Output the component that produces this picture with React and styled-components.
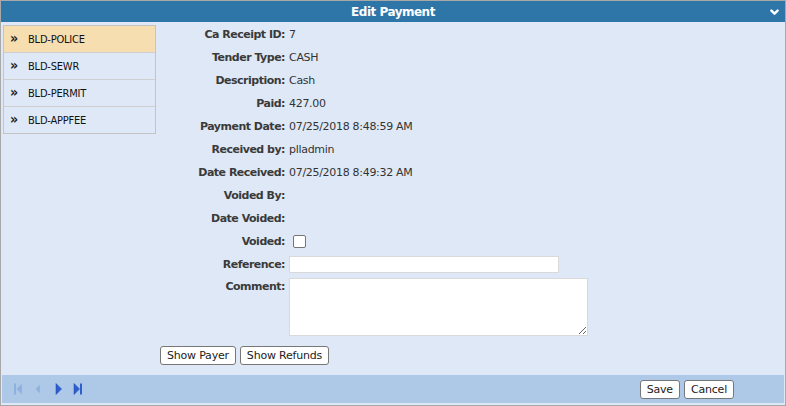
import React, { useState } from 'react';
import styled, { createGlobalStyle } from 'styled-components';

const GlobalStyle = createGlobalStyle`
  body {
    margin: 0;
    background: #ffffff;
    font-family: "DejaVu Sans", Verdana, sans-serif;
    font-size: 11px;
    color: #333;
  }
`;

const fees = ['BLD-POLICE', 'BLD-SEWR', 'BLD-PERMIT', 'BLD-APPFEE'];

const details = [
  ['Ca Receipt ID:', '7'],
  ['Tender Type:', 'CASH'],
  ['Description:', 'Cash'],
  ['Paid:', '427.00'],
  ['Payment Date:', '07/25/2018 8:48:59 AM'],
  ['Received by:', 'plladmin'],
  ['Date Received:', '07/25/2018 8:49:32 AM'],
  ['Voided By:', ''],
  ['Date Voided:', ''],
];

const ChevronDown = () => (
  <svg width="9" height="7" viewBox="0 0 9 7">
    <path d="M1.4 1.6 L4.5 4.7 L7.6 1.6" fill="none" stroke="#fff" strokeWidth="2.4" strokeLinecap="round" strokeLinejoin="round" />
  </svg>
);

const NavIcon = ({ kind, disabled }) => {
  const color = disabled ? '#8eb0dd' : '#2c5fd0';
  const edge = disabled ? '#a9c2e4' : '#1d43a8';
  return (
    <svg width="10" height="14" viewBox="0 0 10 14">
      {kind === 'first' && (
        <>
          <rect x="1" y="1.5" width="2" height="11" fill={color} />
          <path d="M9 1.5 L3.5 7 L9 12.5 Z" fill={color} stroke={edge} strokeWidth="0.5" />
        </>
      )}
      {kind === 'prev' && <path d="M7 2.5 L2.5 7 L7 11.5 Z" fill={color} stroke={edge} strokeWidth="0.5" />}
      {kind === 'next' && <path d="M3 1.5 L8.5 7 L3 12.5 Z" fill={color} stroke={edge} strokeWidth="0.5" />}
      {kind === 'last' && (
        <>
          <path d="M1 1.5 L6.5 7 L1 12.5 Z" fill={color} stroke={edge} strokeWidth="0.5" />
          <rect x="7" y="1.5" width="2" height="11" fill={color} />
        </>
      )}
    </svg>
  );
};

export default function App() {
  const [selected, setSelected] = useState(0);
  const [voided, setVoided] = useState(false);

  return (
    <>
      <GlobalStyle />
      <Panel>
        <Header>
          <Title>Edit Payment</Title>
          <Collapse>
            <ChevronDown />
          </Collapse>
        </Header>
        <Body>
          <FeeList>
            {fees.map((fee, i) => (
              <FeeItem key={fee} $active={i === selected} onClick={() => setSelected(i)}>
                <Arrow>»</Arrow>
                {fee}
              </FeeItem>
            ))}
          </FeeList>
          <Main>
            <Form>
              {details.map(([label, value]) => (
                <Row key={label}>
                  <Label>{label}</Label>
                  <Value>{value}</Value>
                </Row>
              ))}
              <Row>
                <Label>Voided:</Label>
                <Check type="checkbox" checked={voided} onChange={(e) => setVoided(e.target.checked)} />
              </Row>
              <Row>
                <Label>Reference:</Label>
                <TextInput type="text" />
              </Row>
              <Row $top>
                <Label $top>Comment:</Label>
                <Comment />
              </Row>
            </Form>
            <Actions>
              <Button>Show Payer</Button>
              <Button>Show Refunds</Button>
            </Actions>
          </Main>
        </Body>
        <Footer>
          <Pager>
            <NavIcon kind="first" disabled />
            <NavIcon kind="prev" disabled />
            <NavIcon kind="next" />
            <NavIcon kind="last" />
          </Pager>
          <Actions>
            <Button>Save</Button>
            <Button>Cancel</Button>
          </Actions>
        </Footer>
      </Panel>
    </>
  );
}

const Panel = styled.div`
  width: 786px;
  height: 406px;
  box-sizing: border-box;
  border: 1px solid #a8a8a8;
  background: #dfe8f6;
  display: flex;
  flex-direction: column;
`;

const Header = styled.div`
  height: 21px;
  background: #2e76a8;
  color: #fff;
  display: flex;
  align-items: center;
  justify-content: center;
  position: relative;
`;

const Title = styled.div`
  font-weight: bold;
  font-size: 12px;
  letter-spacing: -0.5px;
`;

const Collapse = styled.div`
  position: absolute;
  right: 6px;
  top: 8px;
  display: flex;
`;

const Body = styled.div`
  flex: 1;
  display: flex;
  align-items: flex-start;
  padding: 3px 0 0 2px;
  gap: 4px;
`;

const FeeList = styled.ul`
  list-style: none;
  margin: 0;
  padding: 0;
  width: 151px;
  border: 1px solid #c4c4c4;
`;

const FeeItem = styled.li`
  display: flex;
  align-items: center;
  padding: 1px 0 0 6px;
  box-sizing: border-box;
  height: 27px;
  font-family: "DejaVu Sans Condensed", "DejaVu Sans", sans-serif;
  font-size: 11px;
  letter-spacing: -0.2px;
  color: #111;
  background: ${(p) => (p.$active ? '#f6deb0' : '#dfe8f6')};
  border-top: 1px solid #cfcfcf;
  cursor: pointer;
  &:first-child {
    border-top: none;
    height: 26px;
  }
`;

const Arrow = styled.span`
  font-weight: bold;
  font-size: 14px;
  width: 18px;
  margin-top: -4px;
  color: #222;
`;

const Main = styled.div`
  display: flex;
  flex-direction: column;
`;

const Form = styled.div`
  display: flex;
  flex-direction: column;
  margin-top: -2px;
`;

const Row = styled.div`
  display: flex;
  align-items: ${(p) => (p.$top ? 'flex-start' : 'center')};
  min-height: 23px;
  gap: 4px;
`;

const Label = styled.label`
  width: 125px;
  flex-shrink: 0;
  text-align: right;
  font-weight: bold;
  letter-spacing: -0.5px;
  color: #3a3a3a;
  padding-top: ${(p) => (p.$top ? '4px' : '0')};
`;

const Value = styled.span`
  color: #333;
  letter-spacing: -0.3px;
`;

const Check = styled.input`
  appearance: none;
  width: 13px;
  height: 13px;
  margin: 0 0 0 4px;
  border: 1px solid #767676;
  border-radius: 2px;
  background: #fff;
`;

const TextInput = styled.input`
  width: 270px;
  height: 17px;
  box-sizing: border-box;
  border: 1px solid #d9d9d9;
  background: #fff;
  margin: 0;
  padding: 0 2px;
`;

const Comment = styled.textarea`
  width: 299px;
  height: 58px;
  box-sizing: border-box;
  border: 1px solid #d9d9d9;
  background: #fff;
  margin: 2px 0 0;
  padding: 2px;
  resize: both;
`;

const Actions = styled.div`
  display: flex;
  gap: 4px;
  margin-top: 10px;
`;

const Button = styled.button`
  height: 19px;
  padding: 0 6px;
  border: 1px solid #777;
  border-radius: 3px;
  background: #fff;
  font-family: "DejaVu Sans", Verdana, sans-serif;
  font-size: 11px;
  letter-spacing: -0.2px;
  color: #222;
  cursor: pointer;
`;

const Footer = styled.div`
  height: 28px;
  margin: 0 1px 2px 1px;
  background: #adc9e7;
  display: flex;
  align-items: center;
  justify-content: space-between;
  padding: 0 50px 0 11px;

  ${Actions} {
    margin-top: 0;
  }
`;

const Pager = styled.div`
  display: flex;
  gap: 10px;
  align-items: center;
`;
